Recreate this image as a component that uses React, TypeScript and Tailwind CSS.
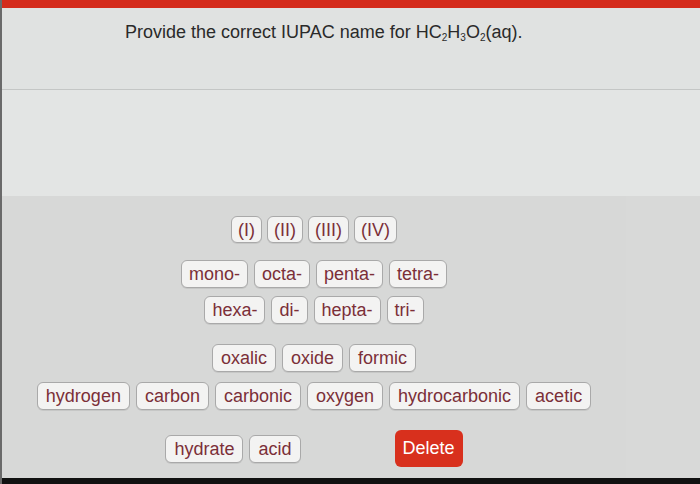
import React from "react";

const Btn = ({ t, px = "px-[8px]" }: { t: string; px?: string }) => (
  <div
    className={
      "h-[28px] flex items-center rounded-[6px] border border-[#a9a9a9] bg-[#f3f3f2] text-[#7b2f38] text-[18px] leading-none shadow-[0_1px_0_rgba(0,0,0,0.08)] " +
      px
    }
  >
    {t}
  </div>
);

const Row = ({
  items,
  className = "",
  px,
}: {
  items: string[];
  className?: string;
  px?: string;
}) => (
  <div className={"flex justify-center gap-[6px] " + className}>
    {items.map((t) => (
      <Btn key={t} t={t} px={px} />
    ))}
  </div>
);

export default function App() {
  return (
    <div
      className="w-[700px] h-[484px] overflow-hidden flex flex-col bg-[#d8d9d8] border-l-2 border-[#6a6a6a]"
      style={{ fontFamily: '"Liberation Sans", Arial, sans-serif' }}
    >
      <div className="h-[8px] bg-[#d42b1b] shrink-0" />
      <div className="h-[82px] shrink-0 bg-[#e0e2e1] border-b border-[#c4c6c5] pl-[123px] pt-[11px]">
        <div className="text-[18px] text-[#2a2a2a]">
          Provide the correct IUPAC name for HC<sub className="text-[10px]">2</sub>H
          <sub className="text-[10px]">3</sub>O<sub className="text-[10px]">2</sub>(aq).
        </div>
      </div>
      <div className="h-[106px] shrink-0 bg-[#e3e5e4]" />
      <div className="flex-1 bg-[#d7d8d7] w-[624px] flex flex-col pt-[20px]">
        <Row items={["(I)", "(II)", "(III)", "(IV)"]} px="px-[6px]" className="!gap-[5px] [&>div]:h-[27px]" />
        <Row items={["mono-", "octa-", "penta-", "tetra-"]} px="px-[7px]" className="mt-[17px]" />
        <Row items={["hexa-", "di-", "hepta-", "tri-"]} px="px-[7px]" className="mt-[8px]" />
        <Row items={["oxalic", "oxide", "formic"]} className="mt-[20px]" />
        <Row
          items={["hydrogen", "carbon", "carbonic", "oxygen", "hydrocarbonic", "acetic"]}
          className="mt-[10px]"
        />
        <div className="flex justify-center items-center mt-[20px]">
          <div className="flex gap-[6px]">
            <Btn t="hydrate" />
            <Btn t="acid" />
          </div>
          <div className="w-[94px]" />
          <div className="h-[37px] px-[8px] flex items-center rounded-[6px] bg-[#d8301d] text-white text-[18px]">
            Delete
          </div>
        </div>
      </div>
      <div className="h-[6px] shrink-0 bg-[#111]" />
    </div>
  );
}
